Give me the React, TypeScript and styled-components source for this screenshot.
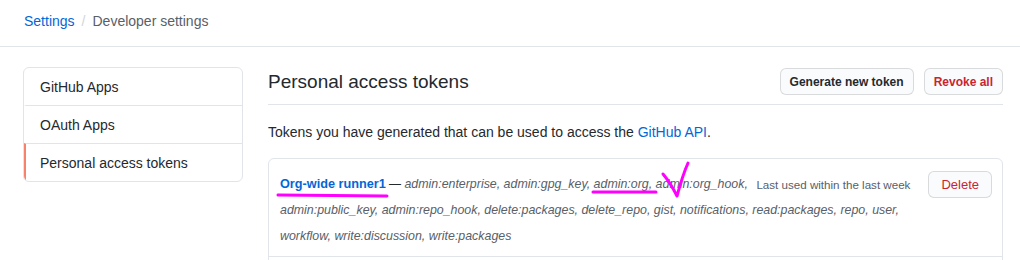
import React from "react";
import styled, { createGlobalStyle } from "styled-components";

const GlobalStyle = createGlobalStyle`
  *, *::before, *::after {
    box-sizing: border-box;
  }
  html, body {
    margin: 0;
    padding: 0;
    background: #ffffff;
  }
  body {
    font-family: "Liberation Sans", Arial, sans-serif;
    font-size: 14px;
    color: #24292e;
  }
`;

const Page = styled.div`
  position: relative;
  width: 1020px;
  height: 260px;
  overflow: hidden;
`;

const Breadcrumb = styled.div`
  display: flex;
  align-items: center;
  gap: 7px;
  height: 47px;
  padding: 0 24px 5px;
  border-bottom: 1px solid #e1e4e8;
  font-size: 14px;
`;

const CrumbLink = styled.a`
  color: #0366d6;
  text-decoration: none;
`;

const CrumbSep = styled.span`
  color: #d1d5da;
`;

const CrumbCurrent = styled.span`
  color: #586069;
`;

const Layout = styled.div`
  display: flex;
  gap: 25px;
  padding: 20px 17px 0 23px;
`;

const SideNav = styled.nav`
  width: 220px;
  flex-shrink: 0;
  align-self: flex-start;
  border: 1px solid #e1e4e8;
  border-radius: 6px;
  overflow: hidden;
`;

const SideItem = styled.a<{ $selected?: boolean }>`
  display: flex;
  align-items: center;
  height: 37px;
  padding: 0 16px 0 14px;
  color: #24292e;
  text-decoration: none;
  border-left: 2px solid ${(p) => (p.$selected ? "#f9826c" : "transparent")};
  & + & {
    height: 38px;
    border-top: 1px solid #e1e4e8;
  }
`;

const Main = styled.main`
  flex: 1;
  min-width: 0;
`;

const Subhead = styled.div`
  display: flex;
  align-items: flex-start;
  justify-content: space-between;
  height: 38px;
  border-bottom: 1px solid #e1e4e8;
`;

const Heading = styled.h2`
  margin: 0;
  font-size: 19px;
  font-weight: 400;
  color: #24292e;
  line-height: 30px;
`;

const Actions = styled.div`
  display: flex;
  gap: 10px;
  margin-top: 1px;
`;

const Button = styled.button<{ $danger?: boolean }>`
  height: 27px;
  padding: 0 9px;
  font-family: inherit;
  font-size: 12px;
  font-weight: 600;
  color: ${(p) => (p.$danger ? "#cb2431" : "#24292e")};
  background: #fafbfc;
  border: 1px solid rgba(27, 31, 35, 0.15);
  border-radius: 6px;
  cursor: pointer;
`;

const Intro = styled.p`
  margin: 17px 0 16px;
  line-height: 20px;
`;

const Link = styled.a`
  color: #0366d6;
  text-decoration: none;
`;

const TokenBox = styled.div`
  border: 1px solid #e1e4e8;
  border-radius: 6px;
`;

const TokenRow = styled.div`
  padding: 12px 10px 7px 11px;
  font-size: 12px;
  line-height: 26px;
  & + & {
    border-top: 1px solid #e1e4e8;
  }
`;

const RowRight = styled.div`
  float: right;
  display: flex;
  align-items: center;
  gap: 18px;
  margin-bottom: -8px;
`;

const Description = styled.div`
  margin-right: 70px;
`;

const LastUsed = styled.span`
  font-size: 11.6px;
  color: #586069;
`;

const SmallButton = styled(Button)`
  height: 27px;
  padding: 0 12px;
  font-weight: 400;
  font-size: 13px;
`;

const TokenName = styled.a`
  font-size: 12.7px;
  font-weight: 700;
  color: #0366d6;
  text-decoration: none;
`;

const Scopes = styled.em`
  font-size: 12.4px;
  color: #586069;
`;

const Marks = styled.svg`
  position: absolute;
  left: 0;
  top: 0;
  pointer-events: none;
`;

const scopes =
  "admin:enterprise, admin:gpg_key, admin:org, admin:org_hook, admin:public_key, admin:repo_hook, delete:packages, delete_repo, gist, notifications, read:packages, repo, user, workflow, write:discussion, write:packages";

export default function App() {
  return (
    <Page>
      <GlobalStyle />
      <Breadcrumb>
        <CrumbLink href="#">Settings</CrumbLink>
        <CrumbSep>/</CrumbSep>
        <CrumbCurrent>Developer settings</CrumbCurrent>
      </Breadcrumb>
      <Layout>
        <SideNav>
          <SideItem href="#">GitHub Apps</SideItem>
          <SideItem href="#">OAuth Apps</SideItem>
          <SideItem href="#" $selected>
            Personal access tokens
          </SideItem>
        </SideNav>
        <Main>
          <Subhead>
            <Heading>Personal access tokens</Heading>
            <Actions>
              <Button>Generate new token</Button>
              <Button $danger>Revoke all</Button>
            </Actions>
          </Subhead>
          <Intro>
            Tokens you have generated that can be used to access the{" "}
            <Link href="#">GitHub API</Link>.
          </Intro>
          <TokenBox>
            <TokenRow>
              <RowRight>
                <LastUsed>Last used within the last week</LastUsed>
                <SmallButton $danger>Delete</SmallButton>
              </RowRight>
              <Description>
                <TokenName href="#">Org-wide runner1</TokenName> —{" "}
                <Scopes>{scopes}</Scopes>
              </Description>
            </TokenRow>
            <TokenRow />
          </TokenBox>
        </Main>
      </Layout>
      <Marks width="1020" height="260" viewBox="0 0 1020 260">
        <g stroke="#ff00ff" strokeWidth="3" strokeLinecap="round" strokeLinejoin="round" fill="none">
          <path d="M278 195 L387 196" />
          <path d="M593 192 L656 192" />
          <path d="M663 174 C668 180 673 188 677 196 C680 185 684 172 688 163" />
        </g>
      </Marks>
    </Page>
  );
}
